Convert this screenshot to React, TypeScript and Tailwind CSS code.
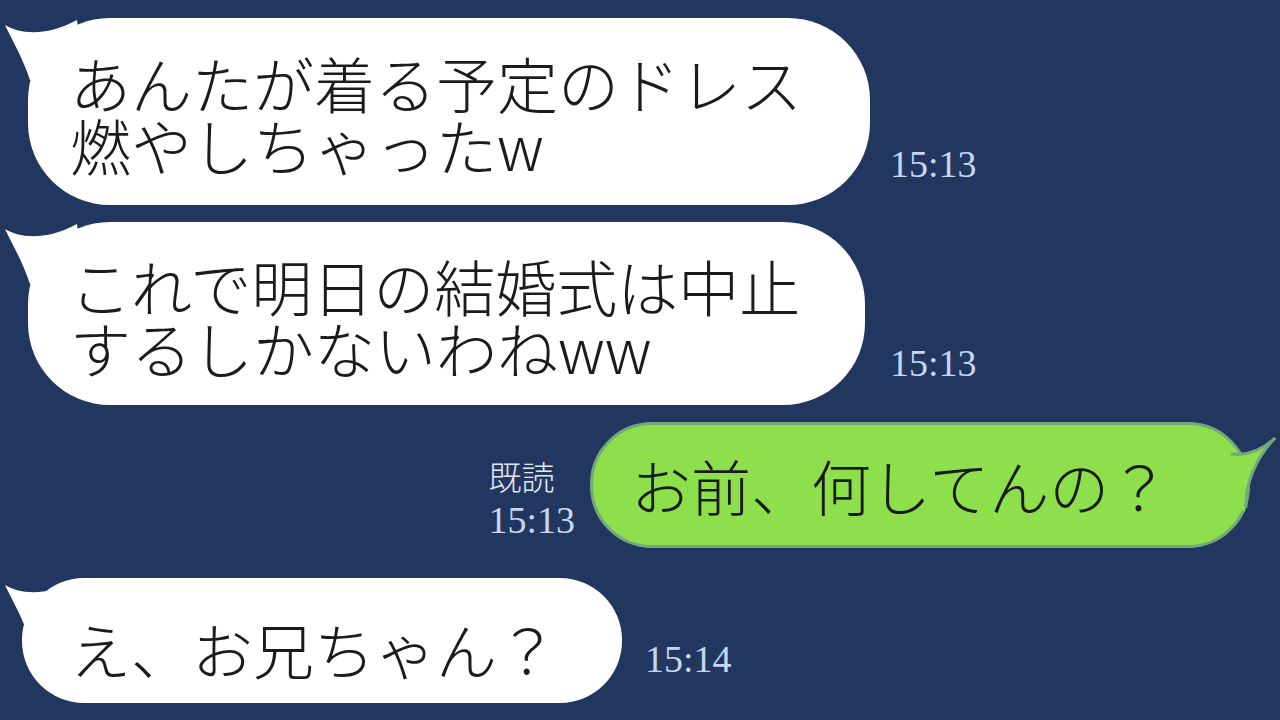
import React from 'react';

const jp = "font-['Noto_Sans_CJK_JP','Noto_Sans',sans-serif]";
const time = "font-['Liberation_Serif',serif] text-[38px] leading-[40px] text-[#c6d6f0]";

const LeftTail: React.FC<{ left?: number }> = ({ left = -24 }) => (
  <svg
    className="absolute top-0"
    style={{ left }}
    width="80"
    height="80"
    viewBox="0 0 80 80"
  >
    <path d="M1 7 C 14 15, 40 20, 73 2 L 80 60 L 26 62 C 18 38, 8 22, 1 7 Z" fill="#ffffff" />
  </svg>
);

const GreenTail: React.FC = () => (
  <svg className="absolute -top-[3px] -right-[30px]" width="60" height="92" viewBox="0 0 60 92">
    <path d="M58 16 C 45 28, 30 34, 6 30 L 0 70 L 28 90 C 28 60, 40 35, 58 16 Z" fill="#8de04c" />
    <path d="M58 16 C 45 28, 30 34, 14 32" fill="none" stroke="#74a77c" strokeWidth="3" />
    <path d="M29 86 C 28 60, 40 35, 58 16" fill="none" stroke="#74a77c" strokeWidth="3" />
  </svg>
);

const App: React.FC = () => {
  return (
    <div className={`w-[1280px] h-[720px] overflow-hidden bg-[#22375f] ${jp} font-light text-[#1b1b1b]`}>
      {/* first message */}
      <div className="flex items-end pt-[18px] pl-[28px]">
        <div className="relative w-[842px] h-[187px] rounded-[82px] bg-white pl-[42px] pt-[34px] text-[61px] leading-[62px]">
          <LeftTail />
          <p className="relative">
            あんたが着る予定のドレス
            <br />
            燃やしちゃったw
          </p>
        </div>
        <div className={`${time} ml-[20px] mb-[21px]`}>15:13</div>
      </div>

      {/* second message */}
      <div className="flex items-end mt-[17px] pl-[28px]">
        <div className="relative w-[837px] h-[183px] rounded-[82px] bg-white pl-[42px] pt-[33px] text-[61px] leading-[62px]">
          <LeftTail />
          <p className="relative">
            これで明日の結婚式は中止
            <br />
            するしかないわねww
          </p>
        </div>
        <div className={`${time} ml-[25px] mb-[22px]`}>15:13</div>
      </div>

      {/* my reply */}
      <div className="flex items-end justify-end mt-[17px] pr-[30px]">
        <div className="flex flex-col gap-[8px] mr-[15px] mb-[8px]">
          <div className="text-[33px] leading-[32px] text-[#e2e8f2]">既読</div>
          <div className={`${time} leading-[34px]`}>15:13</div>
        </div>
        <div className="relative flex items-center w-[660px] h-[126px] rounded-[62px] bg-[#8de04c] border-[3px] border-[#74a77c] pl-[38px] text-[60px] leading-[62px]">
          <GreenTail />
          <span className="relative">お前、何してんの？</span>
        </div>
      </div>

      {/* last message */}
      <div className="flex items-end mt-[30px] pl-[22px]">
        <div className="relative flex items-center w-[600px] h-[125px] rounded-[62px] bg-white pl-[48px] pt-[16px] text-[61px] leading-[62px]">
          <LeftTail left={-18} />
          <span className="relative">え、お兄ちゃん？</span>
        </div>
        <div className={`${time} ml-[23px] mb-[24px]`}>15:14</div>
      </div>
    </div>
  );
};

export default App;
